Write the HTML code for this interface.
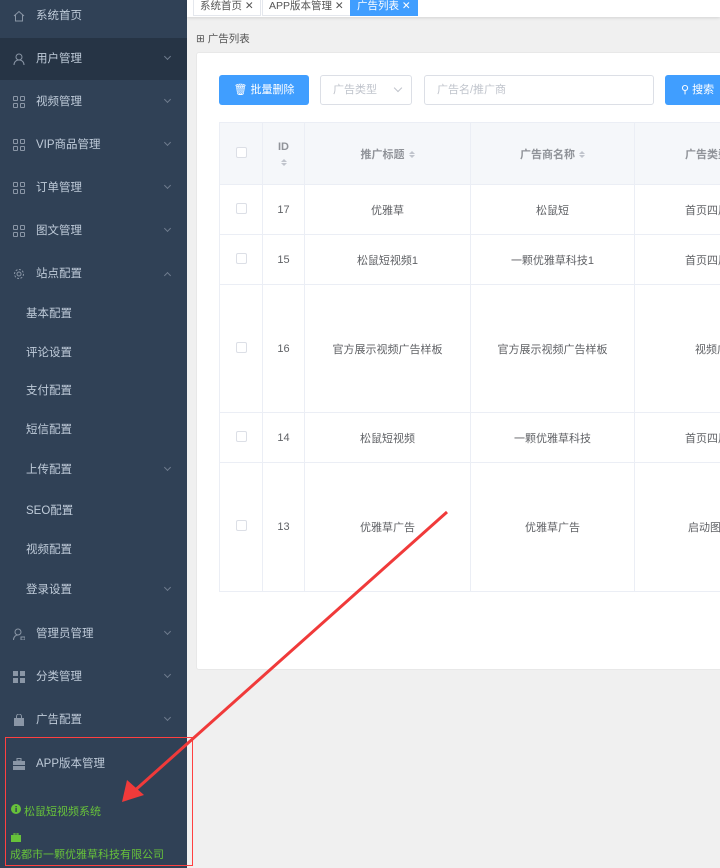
<!DOCTYPE html>
<html><head><meta charset="utf-8"><style>
*{box-sizing:border-box;margin:0;padding:0}
body{width:720px;height:868px;overflow:hidden;background:#f0f0f0;font-family:"Liberation Sans","Noto Sans CJK SC",sans-serif;font-size:11px;position:relative}
.side{position:absolute;left:0;top:0;width:187px;height:868px;background:#304156}
.it{position:absolute;left:0;width:187px;height:42px;color:#bfcbd9;font-size:11.5px;line-height:42px;padding-left:36px}
.it.sub{padding-left:26px}
.it .ic{position:absolute;left:13px;top:15px;width:12px;height:12px}
.it .ar{position:absolute;right:17px;top:16px;width:5px;height:5px;border-right:1px solid #6f7c8e;border-bottom:1px solid #6f7c8e;transform:rotate(45deg)}
.it .ar.up{transform:rotate(-135deg);top:20px}
.g{display:grid;grid-template-columns:5px 5px;gap:2px}
.g i{border:1px solid #8a96a6;border-radius:1px}
.tabs{position:absolute;left:187px;top:0;right:0;height:17px;background:#fff;box-shadow:0 1px 3px rgba(0,0,0,.12)}
.tab{position:absolute;top:-3px;height:19px;border:1px solid #e4e7ed;font-size:10.5px;color:#555;line-height:17px;padding:0 6px;background:#fff}
.card{position:absolute;left:196px;top:52px;width:540px;height:618px;background:#fff;border:1px solid #e8e8e8;border-radius:3px}
.btn{position:absolute;top:75px;height:30px;background:#409eff;color:#fff;border-radius:3px;line-height:30px;font-size:11px}
.inp{position:absolute;top:75px;height:30px;border:1px solid #dcdfe6;border-radius:3px;color:#c0c4cc;line-height:28px;padding-left:12px;background:#fff}
table{position:absolute;left:219px;top:122px;border-collapse:collapse;table-layout:fixed;width:560px}
td,th{border:1px solid #ebeef5;text-align:center;color:#606266;font-size:11px;font-weight:normal}
th{background:#f5f7fa;color:#909399;font-weight:bold;height:62px}
.cb{display:inline-block;width:11px;height:11px;border:1px solid #dcdfe6;background:#fff;border-radius:2px}
.so{display:inline-block;vertical-align:middle;margin-left:4px;width:6px}
.so:before,.so:after{content:"";display:block;border:3px solid transparent}
.so:before{border-bottom:3px solid #c0c4cc;border-top:0;margin-bottom:1px}
.so:after{border-top:3px solid #c0c4cc;border-bottom:0}
.green{color:#67c23a;position:absolute;font-size:11px}
</style></head><body>
<div class="side">
<div class="it" style="top:-5px;"><svg class="ic" viewBox="0 0 12 12"><path d="M1 6L6 1.5 11 6M2.5 5v6h7V5" fill="none" stroke="#8a96a6"/></svg>系统首页</div>
<div class="it" style="top:38px;background:#263445"><svg class="ic" viewBox="0 0 12 12"><circle cx="6" cy="4" r="3" fill="none" stroke="#8a96a6"/><path d="M1 12c0-3 2-5 5-5s5 2 5 5" fill="none" stroke="#8a96a6"/></svg>用户管理<span class="ar"></span></div>
<div class="it" style="top:81px"><span class="ic g"><i></i><i></i><i></i><i></i></span>视频管理<span class="ar"></span></div>
<div class="it" style="top:124px"><span class="ic g"><i></i><i></i><i></i><i></i></span>VIP商品管理<span class="ar"></span></div>
<div class="it" style="top:167px"><span class="ic g"><i></i><i></i><i></i><i></i></span>订单管理<span class="ar"></span></div>
<div class="it" style="top:210px"><span class="ic g"><i></i><i></i><i></i><i></i></span>图文管理<span class="ar"></span></div>
<div class="it" style="top:253px"><svg class="ic" viewBox="0 0 12 12"><circle cx="6" cy="6" r="2" fill="none" stroke="#8a96a6"/><circle cx="6" cy="6" r="4.5" fill="none" stroke="#8a96a6" stroke-dasharray="2 1.5"/></svg>站点配置<span class="ar up"></span></div>
<div class="it sub" style="top:293px">基本配置</div>
<div class="it sub" style="top:332px">评论设置</div>
<div class="it sub" style="top:370px">支付配置</div>
<div class="it sub" style="top:409px">短信配置</div>
<div class="it sub" style="top:449px">上传配置<span class="ar"></span></div>
<div class="it sub" style="top:490px">SEO配置</div>
<div class="it sub" style="top:529px">视频配置</div>
<div class="it sub" style="top:569px">登录设置<span class="ar"></span></div>
<div class="it" style="top:613px"><svg class="ic" viewBox="0 0 12 12"><circle cx="5" cy="4" r="3" fill="none" stroke="#8a96a6"/><path d="M0.5 12c0-3 2-5 4.5-5M8 9h4v3H8z" fill="none" stroke="#8a96a6"/></svg>管理员管理<span class="ar"></span></div>
<div class="it" style="top:656px"><svg class="ic" viewBox="0 0 12 12" fill="#8a96a6"><rect x="0" y="0" width="5" height="5"/><rect x="7" y="0" width="5" height="5"/><rect x="0" y="7" width="5" height="5"/><rect x="7" y="7" width="5" height="5"/></svg>分类管理<span class="ar"></span></div>
<div class="it" style="top:699px"><svg class="ic" viewBox="0 0 12 12"><path d="M3.5 4V2.5a2.5 2.5 0 015 0V4" fill="none" stroke="#8a96a6"/><rect x="1" y="4" width="10" height="8" fill="#8a96a6"/></svg>广告配置<span class="ar"></span></div>
<div class="it" style="top:743px;color:#bfcbd9"><svg class="ic" viewBox="0 0 12 12" fill="#8a96a6"><rect x="4" y="0.5" width="4" height="2.5" fill="none" stroke="#8a96a6"/><rect x="0" y="3" width="12" height="4"/><rect x="0" y="8" width="12" height="4"/></svg>APP版本管理</div>
<svg style="position:absolute;left:11px;top:804px" width="10" height="10" viewBox="0 0 10 10"><circle cx="5" cy="5" r="5" fill="#67c23a"/><rect x="4.4" y="4" width="1.4" height="4" fill="#304156"/><rect x="4.4" y="2" width="1.4" height="1.3" fill="#304156"/></svg>
<div class="green" style="left:24px;top:803px">松鼠短视频系统</div>
<svg style="position:absolute;left:11px;top:833px" width="10" height="9" viewBox="0 0 10 9" fill="#67c23a"><rect x="3" y="0" width="4" height="2" fill="none" stroke="#67c23a"/><rect x="0" y="2" width="10" height="7"/></svg>
<div class="green" style="left:10px;top:846px">成都市一颗优雅草科技有限公司</div>
</div>
<div style="position:absolute;left:5px;top:737px;width:188px;height:129px;border:1px solid #ff4040"></div>
<div class="tabs">
<div class="tab" style="left:6px">系统首页 ✕</div>
<div class="tab" style="left:75px">APP版本管理 ✕</div>
<div class="tab" style="left:163px;background:#409eff;color:#fff;border-color:#409eff">广告列表 ✕</div>
</div>
<div style="position:absolute;left:196px;top:31px;font-size:10.5px;color:#555">⊞ 广告列表</div>
<div class="card"></div>
<div class="btn" style="left:219px;width:90px;text-align:center">🗑 批量删除</div>
<div class="inp" style="left:320px;width:92px">广告类型<span style="position:absolute;right:10px;top:9px;width:6px;height:6px;border-right:1px solid #c0c4cc;border-bottom:1px solid #c0c4cc;transform:rotate(45deg)"></span></div>
<div class="inp" style="left:424px;width:230px">广告名/推广商</div>
<div class="btn" style="left:665px;width:70px;padding-left:16px">⚲ 搜索</div>
<table>
<colgroup><col style="width:43px"><col style="width:42px"><col style="width:166px"><col style="width:164px"><col style="width:145px"></colgroup>
<tr><th><span class="cb"></span></th><th>ID<br><span class="so" style="margin:6px 0 0"></span></th><th>推广标题<span class="so"></span></th><th>广告商名称<span class="so"></span></th><th style="text-align:left;padding-left:50px">广告类型</th></tr>
<tr style="height:50px"><td><span class="cb"></span></td><td>17</td><td>优雅草</td><td>松鼠短</td><td style="text-align:left;padding-left:50px">首页四周</td></tr>
<tr style="height:50px"><td><span class="cb"></span></td><td>15</td><td>松鼠短视频1</td><td>一颗优雅草科技1</td><td style="text-align:left;padding-left:50px">首页四周</td></tr>
<tr style="height:128px"><td><span class="cb"></span></td><td>16</td><td>官方展示视频广告样板</td><td>官方展示视频广告样板</td><td style="text-align:left;padding-left:60px">视频广告</td></tr>
<tr style="height:50px"><td><span class="cb"></span></td><td>14</td><td>松鼠短视频</td><td>一颗优雅草科技</td><td style="text-align:left;padding-left:50px">首页四周</td></tr>
<tr style="height:129px"><td><span class="cb"></span></td><td>13</td><td>优雅草广告</td><td>优雅草广告</td><td style="text-align:left;padding-left:53px">启动图</td></tr>
</table>
<svg style="position:absolute;left:0;top:0" width="720" height="868"><line x1="447" y1="512" x2="132" y2="793" stroke="#f03a3a" stroke-width="3"/><polygon points="122,802 127,780 144,795" fill="#f03a3a"/></svg>
</body></html>
